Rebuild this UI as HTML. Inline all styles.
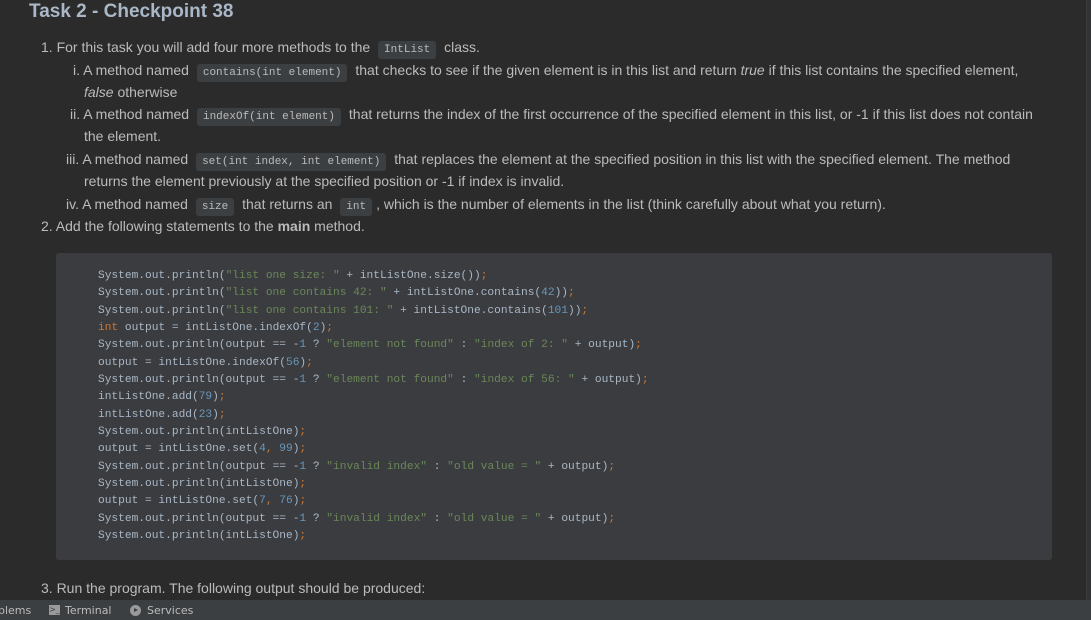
<!DOCTYPE html>
<html><head><meta charset="utf-8"><style>
body{margin:0;width:1091px;height:620px;background:#2b2b2b;overflow:hidden;position:relative;font-family:"Liberation Sans",Arial,sans-serif;color:#bbbbbb;font-size:14px}
.t{position:absolute;white-space:nowrap;line-height:20px}
h1{position:absolute;left:29px;top:0;margin:0;font-size:19px;font-weight:bold;color:#a9b7c6;line-height:24px}
code,.c{font-family:"Liberation Mono","DejaVu Sans Mono",monospace;font-size:11px}
code{background:#3c3f41;border-radius:3px;padding:3px 6px;margin:0 4px;color:#bbbbbb}
.blk{position:absolute;left:56px;top:253px;width:996px;height:307px;background:#3b3c3f;border-radius:3px}
.c{position:absolute;left:98px;top:268px;line-height:17.35px;white-space:pre;color:#a9b7c6;font-size:11.2px}
.s{color:#6a8759}.n{color:#6897bb}.k{color:#cc7832}
.bar{position:absolute;left:0;top:600px;width:1091px;height:20px;background:#3c3f41;font-size:11px;font-family:"DejaVu Sans",sans-serif;color:#bbbbbb}
.sb{position:absolute;left:1086px;top:0;width:5px;height:600px;background:#313335;border-left:1px solid #3a3a3a}
</style></head><body>
<h1>Task 2 - Checkpoint 38</h1>
<div class="t" style="left:41px;top:37px">1. For this task you will add four more methods to the <code>IntList</code> class.</div>
<div class="t" style="left:73px;top:60px">i. A method named <code>contains(int element)</code> that checks to see if the given element is in this list and return <i>true</i> if this list contains the specified element,</div>
<div class="t" style="left:84px;top:82px"><i>false</i> otherwise</div>
<div class="t" style="left:70px;top:104px">ii. A method named <code>indexOf(int element)</code> that returns the index of the first occurrence of the specified element in this list, or -1 if this list does not contain</div>
<div class="t" style="left:84px;top:126px">the element.</div>
<div class="t" style="left:66px;top:149px">iii. A method named <code>set(int index, int element)</code> that replaces the element at the specified position in this list with the specified element. The method</div>
<div class="t" style="left:84px;top:171px">returns the element previously at the specified position or -1 if index is invalid.</div>
<div class="t" style="left:66px;top:194px">iv. A method named <code>size</code> that returns an <code>int</code>, which is the number of elements in the list (think carefully about what you return).</div>
<div class="t" style="left:41px;top:216px">2. Add the following statements to the <b>main</b> method.</div>
<div class="blk"></div>
<div class="c">System.out.println(<span class="s">"list one size: "</span> + intListOne.size())<span class="k">;</span>
System.out.println(<span class="s">"list one contains 42: "</span> + intListOne.contains(<span class="n">42</span>))<span class="k">;</span>
System.out.println(<span class="s">"list one contains 101: "</span> + intListOne.contains(<span class="n">101</span>))<span class="k">;</span>
<span class="k">int</span> output = intListOne.indexOf(<span class="n">2</span>)<span class="k">;</span>
System.out.println(output == -<span class="n">1</span> ? <span class="s">"element not found"</span> : <span class="s">"index of 2: "</span> + output)<span class="k">;</span>
output = intListOne.indexOf(<span class="n">56</span>)<span class="k">;</span>
System.out.println(output == -<span class="n">1</span> ? <span class="s">"element not found"</span> : <span class="s">"index of 56: "</span> + output)<span class="k">;</span>
intListOne.add(<span class="n">79</span>)<span class="k">;</span>
intListOne.add(<span class="n">23</span>)<span class="k">;</span>
System.out.println(intListOne)<span class="k">;</span>
output = intListOne.set(<span class="n">4</span><span class="k">,</span> <span class="n">99</span>)<span class="k">;</span>
System.out.println(output == -<span class="n">1</span> ? <span class="s">"invalid index"</span> : <span class="s">"old value = "</span> + output)<span class="k">;</span>
System.out.println(intListOne)<span class="k">;</span>
output = intListOne.set(<span class="n">7</span><span class="k">,</span> <span class="n">76</span>)<span class="k">;</span>
System.out.println(output == -<span class="n">1</span> ? <span class="s">"invalid index"</span> : <span class="s">"old value = "</span> + output)<span class="k">;</span>
System.out.println(intListOne)<span class="k">;</span></div>
<div class="t" style="left:41px;top:578px">3. Run the program. The following output should be produced:</div>
<div class="sb"></div>
<div class="bar">
<span style="position:absolute;left:-2px;top:4px">blems</span>
<span style="position:absolute;left:49px;top:5px;width:11px;height:10px;background:#9a9a9a;color:#3c3f41;font-size:8px;line-height:10px;text-align:center">&gt;_</span>
<span style="position:absolute;left:65px;top:4px">Terminal</span>
<span style="position:absolute;left:130px;top:5px;width:11px;height:11px;border-radius:50%;background:#9a9a9a"></span>
<span style="position:absolute;left:134px;top:8px;width:0;height:0;border-left:4px solid #3c3f41;border-top:2.5px solid transparent;border-bottom:2.5px solid transparent"></span>
<span style="position:absolute;left:147px;top:4px">Services</span>
</div>
</body></html>
